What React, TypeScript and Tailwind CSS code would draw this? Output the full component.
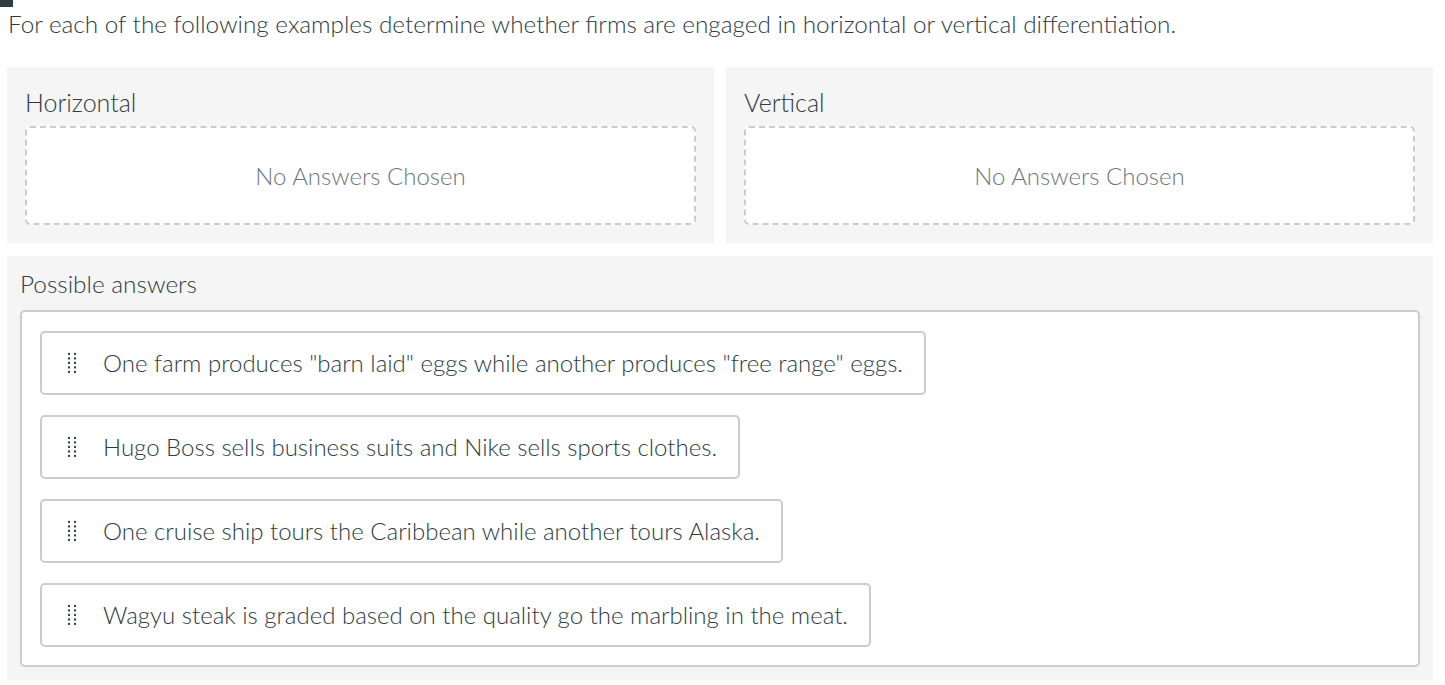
import React from "react";

function Dots() {
  const rows = [0, 1, 2, 3, 4];
  return (
    <svg width="12" height="22" viewBox="0 0 12 22" className="shrink-0">
      {rows.map((r) => (
        <g key={r}>
          <circle cx="2" cy={2 + r * 4.5} r="1.15" fill="#2d3b45" />
          <circle cx="8" cy={2 + r * 4.5} r="1.15" fill="#2d3b45" />
        </g>
      ))}
    </svg>
  );
}

function Bucket({ label }: { label: string }) {
  return (
    <div className="flex-1 bg-[#f5f5f5] px-[18px] pt-[20px] pb-[18px]">
      <div className="text-[25px] leading-[30px] mb-[9px] font-light">{label}</div>
      <div className="h-[99px] rounded-[5px] border-2 border-dashed border-[#c7cdd1] bg-white flex items-center justify-center text-[#6b7780] text-[24px] font-light">
        No Answers Chosen
      </div>
    </div>
  );
}

const answers = [
  'One farm produces "barn laid" eggs while another produces "free range" eggs.',
  "Hugo Boss sells business suits and Nike sells sports clothes.",
  "One cruise ship tours the Caribbean while another tours Alaska.",
  "Wagyu steak is graded based on the quality go the marbling in the meat.",
];

export default function App() {
  return (
    <div
      className="bg-white text-[#2d3b45] w-[1445px] h-[685px] relative overflow-hidden font-light"
      style={{ fontFamily: "Lato, 'Noto Sans', sans-serif" }}
    >
      <div className="absolute left-0 top-0 w-[13px] h-[7px] bg-[#2d3b45]" />
      <div className="pl-[7px] pr-[12px]">
        <div className="pt-[9px] text-[24.3px] leading-[30px] pl-[1px]">
          For each of the following examples determine whether firms are engaged in horizontal or vertical differentiation.
        </div>
        <div className="mt-[28px] flex gap-[12px]">
          <Bucket label="Horizontal" />
          <Bucket label="Vertical" />
        </div>
        <div className="mt-[13px] bg-[#f5f5f5] px-[13px] pt-[13px] pb-[13px]">
          <div className="text-[24.4px] leading-[30px] mb-[11px]">Possible answers</div>
          <div className="rounded-[5px] border-2 border-[#c7cdd1] bg-white pl-[18px] pt-[19px] pb-[18px] flex flex-col items-start gap-[20px]">
            {answers.map((a) => (
              <div
                key={a}
                className="h-[64px] rounded-[5px] border-2 border-[#c7cdd1] bg-white flex items-center pl-[25px] pr-[21px] text-[24px]"
              >
                <Dots />
                <span className="ml-[24px]">{a}</span>
              </div>
            ))}
          </div>
        </div>
      </div>
    </div>
  );
}
